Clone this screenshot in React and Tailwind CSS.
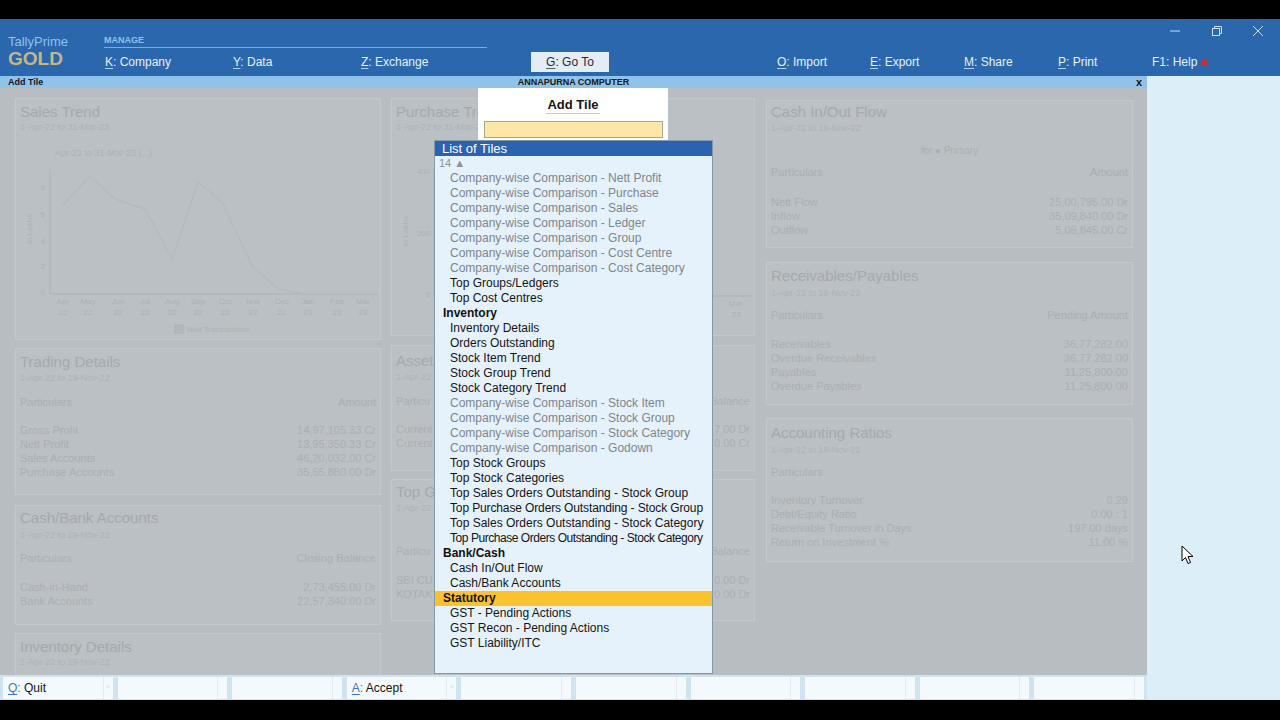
import React from "react";

const FONT = { fontFamily: '"Liberation Sans", Arial, sans-serif' };

const listItems = [
  ["g", "Company-wise Comparison - Nett Profit"],
  ["g", "Company-wise Comparison - Purchase"],
  ["g", "Company-wise Comparison - Sales"],
  ["g", "Company-wise Comparison - Ledger"],
  ["g", "Company-wise Comparison - Group"],
  ["g", "Company-wise Comparison - Cost Centre"],
  ["g", "Company-wise Comparison - Cost Category"],
  ["n", "Top Groups/Ledgers"],
  ["n", "Top Cost Centres"],
  ["h", "Inventory"],
  ["n", "Inventory Details"],
  ["n", "Orders Outstanding"],
  ["n", "Stock Item Trend"],
  ["n", "Stock Group Trend"],
  ["n", "Stock Category Trend"],
  ["g", "Company-wise Comparison - Stock Item"],
  ["g", "Company-wise Comparison - Stock Group"],
  ["g", "Company-wise Comparison - Stock Category"],
  ["g", "Company-wise Comparison - Godown"],
  ["n", "Top Stock Groups"],
  ["n", "Top Stock Categories"],
  ["n", "Top Sales Orders Outstanding - Stock Group"],
  ["t1", "Top Purchase Orders Outstanding - Stock Group"],
  ["n", "Top Sales Orders Outstanding - Stock Category"],
  ["t2", "Top Purchase Orders Outstanding - Stock Category"],
  ["h", "Bank/Cash"],
  ["n", "Cash In/Out Flow"],
  ["n", "Cash/Bank Accounts"],
  ["s", "Statutory"],
  ["n", "GST - Pending Actions"],
  ["n", "GST Recon - Pending Actions"],
  ["n", "GST Liability/ITC"],
];

function ListRow({ kind, text }) {
  if (kind === "h")
    return <div className="h-[15px] leading-[15px] pl-[8px] text-[12px] font-bold text-[#111]">{text}</div>;
  if (kind === "s")
    return (
      <div className="h-[15px] leading-[15px] pl-[8px] text-[12px] font-bold text-[#111] bg-[#f9c22e]">{text}</div>
    );
  if (kind === "g")
    return <div className="h-[15px] leading-[15px] pl-[15px] text-[12px] text-[#7d858d] whitespace-nowrap">{text}</div>;
  if (kind === "t1")
    return (
      <div className="h-[15px] leading-[15px] pl-[15px] text-[12px] text-[#141414] whitespace-nowrap tracking-[-0.13px]">
        {text}
      </div>
    );
  if (kind === "t2")
    return (
      <div className="h-[15px] leading-[15px] pl-[15px] text-[12px] text-[#141414] whitespace-nowrap tracking-[-0.45px]">
        {text}
      </div>
    );
  return <div className="h-[15px] leading-[15px] pl-[15px] text-[12px] text-[#141414] whitespace-nowrap">{text}</div>;
}

function Key({ k, label, dark }) {
  return (
    <span className={dark ? "text-[#1d2c3c]" : "text-[#e8f0fa]"}>
      <span className={dark ? "underline underline-offset-2 decoration-[#506070]" : "underline underline-offset-2 decoration-[#a9d0f5]"}>
        {k}
      </span>
      : {label}
    </span>
  );
}

function Rows({ rows }) {
  return (
    <div className="flex flex-col">
      {rows.map(([a, b]) => (
        <div key={a} className="flex justify-between h-[14px] leading-[14px] text-[11px] text-[#a9afb4]">
          <span>{a}</span>
          <span>{b}</span>
        </div>
      ))}
    </div>
  );
}

function Head({ left, right }) {
  return (
    <div className="flex justify-between h-[12px] leading-[12px] text-[11px] text-[#a9afb4]">
      <span>{left}</span>
      <span>{right}</span>
    </div>
  );
}

function Title({ t }) {
  return <div className="h-[18px] leading-[18px] text-[15px] text-[#a3a9ae] whitespace-nowrap">{t}</div>;
}
function Sub({ t, cls = "" }) {
  return <div className={"h-[12px] leading-[12px] text-[9px] text-[#acb2b7] whitespace-nowrap " + cls}>{t}</div>;
}

const SUB = "1-Apr-22 to 19-Nov-22";

function SalesChart() {
  const months = ["Apr", "May", "Jun", "Jul", "Aug", "Sep", "Oct", "Nov", "Dec", "Jan", "Feb", "Mar"];
  const xs = [43, 68, 98, 125, 152, 178, 205, 233, 262, 288, 317, 343];
  const yrs = ["22", "22", "22", "22", "22", "22", "22", "22", "22", "23", "23", "23"];
  const pts = [
    [42, 72], [70, 42], [95, 65], [125, 75], [152, 125], [178, 48], [202, 68], [232, 132], [258, 155], [285, 160], [358, 160],
  ];
  return (
    <svg width="360" height="206" className="mt-[1px]" style={FONT}>
      <text x="35" y="22" fontSize="9" fill="#aab0b5">Apr-22 to 31-Mar-23 (...)</text>
      <line x1="30" y1="35" x2="30" y2="160" stroke="#a9afb4" strokeWidth="1" />
      <line x1="30" y1="160" x2="358" y2="160" stroke="#a9afb4" strokeWidth="1" />
      {[53, 80, 107, 132, 158].map((y, i) => (
        <text key={y} x="25" y={y + 3} fontSize="8" fill="#aab0b5" textAnchor="end">{["8", "6", "4", "2", "0"][i]}</text>
      ))}
      <text x="12" y="95" fontSize="8" fill="#aab0b5" transform="rotate(-90 12 95)" textAnchor="middle">in Lakhs</text>
      <polyline points={pts.map((p) => p.join(",")).join(" ")} fill="none" stroke="#b4babe" strokeWidth="1.5" />
      {months.map((m, i) => (
        <g key={m}>
          <text x={xs[i]} y="170" fontSize="8" fill="#aab0b5" textAnchor="middle">{m}</text>
          <text x={xs[i]} y="181" fontSize="8" fill="#aab0b5" textAnchor="middle">{yrs[i]}</text>
        </g>
      ))}
      <rect x="155" y="191" width="8" height="8" fill="#b1b7bb" stroke="#aab0b5" />
      <text x="167" y="198" fontSize="8" fill="#aab0b5">Nett Transactions</text>
    </svg>
  );
}

function PurchaseChart() {
  return (
    <svg width="358" height="200" className="mt-[3px]" style={FONT}>
      <line x1="38" y1="33" x2="38" y2="160" stroke="#a9afb4" strokeWidth="1" />
      <line x1="38" y1="160" x2="356" y2="160" stroke="#a9afb4" strokeWidth="1" />
      <text x="34" y="38" fontSize="8" fill="#aab0b5" textAnchor="end">400</text>
      <text x="34" y="100" fontSize="8" fill="#aab0b5" textAnchor="end">200</text>
      <text x="34" y="161" fontSize="8" fill="#aab0b5" textAnchor="end">0</text>
      <text x="12" y="95" fontSize="8" fill="#aab0b5" transform="rotate(-90 12 95)" textAnchor="middle">in Lakhs</text>
      <text x="340" y="170" fontSize="8" fill="#aab0b5" textAnchor="middle">Mar</text>
      <text x="340" y="181" fontSize="8" fill="#aab0b5" textAnchor="middle">23</text>
    </svg>
  );
}

const card = "bg-[#bbc0c4] border border-[#c3c8cc] px-[4px] overflow-hidden";

export default function App() {
  return (
    <div className="w-[1280px] h-[720px] bg-black flex flex-col overflow-hidden" style={FONT}>
      <div className="h-[19px] bg-black shrink-0" />

      {/* Header */}
      <header className="h-[57px] shrink-0 bg-[#2b67ad] relative flex">
        <div className="w-[104px] pl-[8px] pt-[15px] flex flex-col">
          <span className="text-[13px] leading-[15px] text-[#8fc1ef]">TallyPrime</span>
          <span className="text-[19px] leading-[20px] font-bold text-[#c5b78b]">GOLD</span>
        </div>
        <div className="flex flex-col pt-[15px]">
          <div className="w-[383px] h-[14px] border-b border-[#79ade2] text-[9px] font-bold leading-[12px] text-[#8fc1ef]">
            MANAGE
          </div>
          <div className="flex items-center h-[26px] pt-[2px] text-[12px]">
            <div className="w-[128px] pl-[1px]"><Key k="K" label="Company" /></div>
            <div className="w-[128px] pl-[1px]"><Key k="Y" label="Data" /></div>
            <div className="w-[171px] pl-[1px]"><Key k="Z" label="Exchange" /></div>
            <div className="w-[78px] h-[20px] bg-[#e4edf6] flex items-center justify-center">
              <Key k="G" label="Go To" dark />
            </div>
            <div className="w-[167px]" />
            <div className="w-[93px] pl-[1px]"><Key k="O" label="Import" /></div>
            <div className="w-[94px] pl-[1px]"><Key k="E" label="Export" /></div>
            <div className="w-[94px] pl-[1px]"><Key k="M" label="Share" /></div>
            <div className="w-[94px] pl-[1px]"><Key k="P" label="Print" /></div>
            <div className="flex items-center text-[#e8f0fa] pl-[1px]">
              F1: Help
              <span className="ml-[5px] w-[5px] h-[5px] bg-[#e0262b] rounded-[1px]" />
            </div>
          </div>
        </div>
        <div className="absolute left-[1168px] top-[5px] h-[14px] flex items-center gap-[28px]">
          <svg width="14" height="14" viewBox="0 0 14 14"><line x1="2" y1="7" x2="12" y2="7" stroke="#cfe0f3" strokeWidth="1" /></svg>
          <svg width="14" height="14" viewBox="0 0 14 14" className="ml-[-1px]">
            <rect x="3.5" y="4.5" width="7" height="7" fill="none" stroke="#cfe0f3" />
            <polyline points="5.5,4.5 5.5,2.5 12.5,2.5 12.5,9.5 10.5,9.5" fill="none" stroke="#cfe0f3" />
          </svg>
          <svg width="14" height="14" viewBox="0 0 14 14"><path d="M2 2 L12 12 M12 2 L2 12" stroke="#cfe0f3" strokeWidth="1" /></svg>
        </div>
      </header>

      <div className="flex flex-1 min-h-0">
        <div className="w-[1147px] flex flex-col">
          {/* title bar */}
          <div className="h-[12px] bg-[#8fc3ea] grid grid-cols-[1fr_auto_1fr] items-center text-[9px] font-bold text-[#161616] leading-[12px]">
            <span className="pl-[8px]">Add Tile</span>
            <span>ANNAPURNA COMPUTER</span>
            <span className="text-right pr-[5px] text-[11px]">x</span>
          </div>

          {/* main */}
          <div className="relative h-[587px] bg-[#b8bdc1] overflow-hidden">
            <div className="flex pl-[15px] pt-[10px]">
              {/* left column */}
              <div className="w-[366px] flex flex-col">
                <div className={card + " h-[242px] pt-[4px]"}>
                  <Title t="Sales Trend" />
                  <Sub t="1-Apr-22 to 31-Mar-23" />
                  <SalesChart />
                </div>
                <div className={card + " h-[147px] mt-[8px] pt-[4px]"}>
                  <Title t="Trading Details" />
                  <Sub t={SUB} cls="mt-[1px]" />
                  <div className="mt-[12px]"><Head left="Particulars" right="Amount" /></div>
                  <div className="mt-[15px]">
                    <Rows rows={[
                      ["Gross Profit", "14,97,105.33 Cr"],
                      ["Nett Profit", "13,95,350.33 Cr"],
                      ["Sales Accounts", "46,20,032.00 Cr"],
                      ["Purchase Accounts", "35,55,880.00 Dr"],
                    ]} />
                  </div>
                </div>
                <div className={card + " h-[120px] mt-[10px] pt-[3px]"}>
                  <Title t="Cash/Bank Accounts" />
                  <Sub t={SUB} cls="mt-[2px]" />
                  <div className="mt-[11px]"><Head left="Particulars" right="Closing Balance" /></div>
                  <div className="mt-[16px]">
                    <Rows rows={[
                      ["Cash-in-Hand", "2,73,455.00 Dr"],
                      ["Bank Accounts", "22,57,340.00 Dr"],
                    ]} />
                  </div>
                </div>
                <div className={card + " h-[120px] mt-[8px] pt-[4px]"}>
                  <Title t="Inventory Details" />
                  <Sub t={SUB} />
                </div>
              </div>

              {/* middle column (mostly under the popup) */}
              <div className="w-[364px] ml-[10px] flex flex-col">
                <div className={card + " h-[238px] pt-[4px]"}>
                  <Title t="Purchase Trend" />
                  <Sub t="1-Apr-22 to 31-Mar-23" />
                  <PurchaseChart />
                </div>
                <div className={card + " h-[126px] mt-[9px] pt-[6px]"}>
                  <Title t="Assets" />
                  <Sub t="1-Apr-22" cls="mt-[1px]" />
                  <div className="mt-[12px]"><Head left="Particu" right="Balance" /></div>
                  <div className="mt-[15px]">
                    <Rows rows={[
                      ["Current", "7.00 Dr"],
                      ["Current ", "0.00 Cr"],
                    ]} />
                  </div>
                </div>
                <div className={card + " h-[142px] mt-[8px] pt-[3px]"}>
                  <Title t="Top G" />
                  <Sub t="1-Apr-22" cls="mt-[1px]" />
                  <div className="mt-[31px]"><Head left="Particu" right="Balance" /></div>
                  <div className="mt-[16px]">
                    <Rows rows={[
                      ["SBI CU", "0.00 Dr"],
                      ["KOTAK", "0.00 Dr"],
                    ]} />
                  </div>
                </div>
              </div>

              {/* right column */}
              <div className="w-[367px] ml-[11px] flex flex-col">
                <div className={card + " h-[148px] mt-[2px] pt-[2px]"}>
                  <Title t="Cash In/Out Flow" />
                  <Sub t={SUB} cls="mt-[1px]" />
                  <div className="mt-[11px] text-center text-[10px] leading-[12px] text-[#a9afb4]">for ● Primary</div>
                  <div className="mt-[9px]"><Head left="Particulars" right="Amount" /></div>
                  <div className="mt-[17px]">
                    <Rows rows={[
                      ["Nett Flow", "25,00,795.00 Dr"],
                      ["Inflow", "35,09,840.00 Dr"],
                      ["Outflow", "5,08,845.00 Cr"],
                    ]} />
                  </div>
                </div>
                <div className={card + " h-[143px] mt-[14px] pt-[4px]"}>
                  <Title t="Receivables/Payables" />
                  <Sub t={SUB} cls="mt-[2px]" />
                  <div className="mt-[10px]"><Head left="Particulars" right="Pending Amount" /></div>
                  <div className="mt-[16px]">
                    <Rows rows={[
                      ["Receivables", "36,77,282.00"],
                      ["Overdue Receivables", "36,77,282.00"],
                      ["Payables", "11,25,800.00"],
                      ["Overdue Payables", "11,25,800.00"],
                    ]} />
                  </div>
                </div>
                <div className={card + " h-[144px] mt-[13px] pt-[5px]"}>
                  <Title t="Accounting Ratios" />
                  <Sub t={SUB} cls="mt-[2px]" />
                  <div className="mt-[10px]"><Head left="Particulars" right="" /></div>
                  <div className="mt-[15px]">
                    <Rows rows={[
                      ["Inventory Turnover", "0.29"],
                      ["Debt/Equity Ratio", "0.00 : 1"],
                      ["Receivable Turnover in Days", "197.00 days"],
                      ["Return on Investment %", "11.00 %"],
                    ]} />
                  </div>
                </div>
              </div>
            </div>

            {/* Add Tile popup */}
            <div className="absolute left-[478px] top-0 w-[190px] h-[52px] bg-white flex flex-col items-center">
              <div className="mt-[9px] text-[13px] font-bold leading-[16px] text-[#141414] border-b border-[#c9ccd0] px-[1px]">
                Add Tile
              </div>
              <div className="mt-[7px] w-[179px] h-[17px] bg-[#fde6a6] border border-[#9dab8e]" />
            </div>

            {/* List of tiles */}
            <div className="absolute left-[434px] top-[52px] w-[279px] h-[534px] bg-[#e6f2fb] border border-[#8797a6] flex flex-col">
              <div className="h-[15px] bg-[#2a63b1] text-white text-[13px] leading-[15px] pl-[7px]">List of Tiles</div>
              <div className="h-[15px] leading-[15px] pl-[4px] text-[11px] text-[#8a9199]">
                14 <span className="text-[11px]">▲</span>
              </div>
              {listItems.map(([k, t]) => (
                <ListRow key={t} kind={k} text={t} />
              ))}
            </div>
          </div>

          {/* bottom bar */}
          <div className="h-[25px] bg-[#cfe3f0] grid grid-cols-10 gap-[5px] px-[3px] pt-[2px] pb-[1px]">
            {["Q:Quit", "", "", "A:Accept", "", "", "", "", "", ""].map((b, i) => (
              <div key={i} className="bg-[#f4f9fd] flex">
                <div className="flex-1 flex items-center pl-[5px] text-[12px] text-[#141414]">
                  {b && (
                    <span>
                      <span className="text-[#3b78c4] underline underline-offset-2">{b[0]}</span>
                      <span className="text-[#3b78c4]">:</span> {b.slice(2)}
                    </span>
                  )}
                </div>
                <div className="w-[10px] border-l border-[#dfe9f1] flex items-center justify-center text-[7px] text-[#c5ccd2]">
                  {b ? "^" : ""}
                </div>
              </div>
            ))}
          </div>
        </div>

        {/* right panel */}
        <div className="flex-1 bg-[#dceef8] relative">
          <svg className="absolute left-[34px] top-[469px]" width="14" height="20" viewBox="0 0 14 20">
            <path d="M1 1 L1 16 L4.5 12.5 L7 18.5 L9.5 17.5 L7 11.5 L12 11.5 Z" fill="#fff" stroke="#000" strokeWidth="1" strokeLinejoin="round" />
          </svg>
        </div>
      </div>

      <div className="h-[20px] bg-black shrink-0" />
    </div>
  );
}
